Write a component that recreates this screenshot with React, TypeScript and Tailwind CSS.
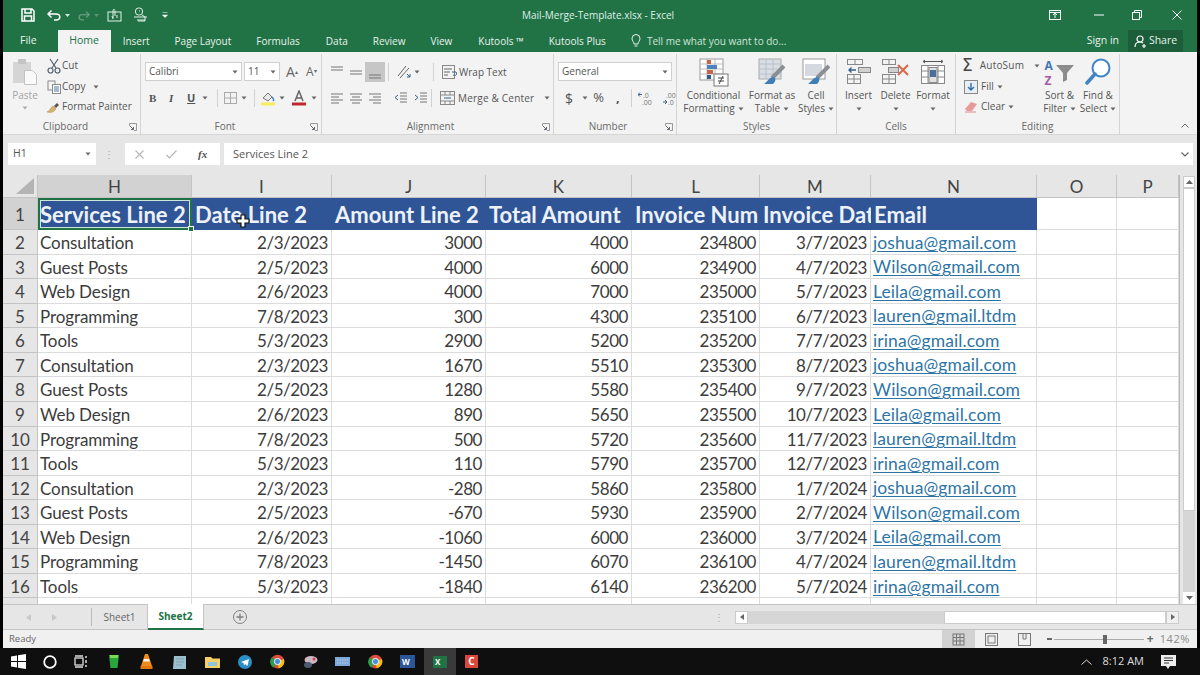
import React from "react";

const ribbonFont = "[font-family:'Open_Sans','Noto_Sans',sans-serif]";

type Row = [string, string, string, string, string, string, string];
const rows: Row[] = [
  ["Consultation", "2/3/2023", "3000", "4000", "234800", "3/7/2023", "joshua@gmail.com"],
  ["Guest Posts", "2/5/2023", "4000", "6000", "234900", "4/7/2023", "Wilson@gmail.com"],
  ["Web Design", "2/6/2023", "4000", "7000", "235000", "5/7/2023", "Leila@gmail.com"],
  ["Programming", "7/8/2023", "300", "4300", "235100", "6/7/2023", "lauren@gmail.ltdm"],
  ["Tools", "5/3/2023", "2900", "5200", "235200", "7/7/2023", "irina@gmail.com"],
  ["Consultation", "2/3/2023", "1670", "5510", "235300", "8/7/2023", "joshua@gmail.com"],
  ["Guest Posts", "2/5/2023", "1280", "5580", "235400", "9/7/2023", "Wilson@gmail.com"],
  ["Web Design", "2/6/2023", "890", "5650", "235500", "10/7/2023", "Leila@gmail.com"],
  ["Programming", "7/8/2023", "500", "5720", "235600", "11/7/2023", "lauren@gmail.ltdm"],
  ["Tools", "5/3/2023", "110", "5790", "235700", "12/7/2023", "irina@gmail.com"],
  ["Consultation", "2/3/2023", "-280", "5860", "235800", "1/7/2024", "joshua@gmail.com"],
  ["Guest Posts", "2/5/2023", "-670", "5930", "235900", "2/7/2024", "Wilson@gmail.com"],
  ["Web Design", "2/6/2023", "-1060", "6000", "236000", "3/7/2024", "Leila@gmail.com"],
  ["Programming", "7/8/2023", "-1450", "6070", "236100", "4/7/2024", "lauren@gmail.ltdm"],
  ["Tools", "5/3/2023", "-1840", "6140", "236200", "5/7/2024", "irina@gmail.com"],
];

const Caret = ({ className = "" }: { className?: string }) => (
  <svg width="6" height="4" viewBox="0 0 6 4" className={className}><path d="M0.5 0.5h5L3 3.5z" fill="#666" /></svg>
);

const Launcher = () => (
  <svg width="8" height="8" viewBox="0 0 8 8" className="shrink-0">
    <path d="M0.5 3V0.5H7.5V7.5H5" fill="none" stroke="#999" />
    <path d="M1 3l3.5 3.5M4.5 4v2.5H2" fill="none" stroke="#667" />
  </svg>
);

const Group = ({ w, label, labelClass = "", launcher = true, children }: { w: string; label: string; labelClass?: string; launcher?: boolean; children: React.ReactNode }) => (
  <div className={`${w} h-[80px] shrink-0 flex flex-col border-r border-[#d4d4d4] mt-[2px]`}>
    <div className="flex-1 min-h-0 flex">{children}</div>
    <div className="h-[15px] flex items-center relative text-[10px] text-[#6a6a6a]">
      <span className={`flex-1 text-center ${labelClass}`}>{label}</span>
      {launcher && <span className="absolute right-[3px] top-[4px]"><Launcher /></span>}
    </div>
  </div>
);

const Combo = ({ w, text }: { w: string; text: string }) => (
  <div className={`${w} h-[19px] bg-white border border-[#d0d0d0] flex items-center justify-between px-[3px] text-[10px] text-[#555]`}>
    <span>{text}</span>
    <Caret />
  </div>
);

const AlignLines = ({ kind }: { kind: "top" | "mid" | "bot" | "left" | "center" | "right" }) => {
  const d: Record<string, string> = {
    top: "M2 2h12M2 5h12",
    mid: "M2 6h12M2 9h12",
    bot: "M2 10h12M2 13h12",
    left: "M2 3h12M2 6h8M2 9h12M2 12h8",
    center: "M2 3h12M4 6h8M2 9h12M4 12h8",
    right: "M2 3h12M6 6h8M2 9h12M6 12h8",
  };
  return <svg width="16" height="15" viewBox="0 0 16 15"><path d={d[kind]} stroke="#777" strokeWidth="1" fill="none" /></svg>;
};

const BigLabel = ({ w, a, b }: { w: string; a: string; b?: string }) => (
  <div className={`${w} flex flex-col items-center text-[10px] leading-[13px] text-[#555] whitespace-nowrap`}>
    <span>{a}</span>
    {b ? (
      <span className="flex items-center gap-[3px]">{b}<Caret /></span>
    ) : (
      <span className="h-[13px] flex items-center"><Caret /></span>
    )}
  </div>
);

const ConditionalIcon = () => (
  <svg width="30" height="29" viewBox="0 0 30 29">
    <rect x="1" y="1" width="23" height="21" fill="#fff" stroke="#999" />
    <path d="M1 6h23M1 11h23M1 16h23M8 1v21M16 1v21" stroke="#bbb" />
    <rect x="8" y="2" width="4" height="4" fill="#c2674a" />
    <rect x="8" y="7" width="10" height="4" fill="#4f81bd" />
    <rect x="8" y="12" width="6" height="4" fill="#c2674a" />
    <rect x="8" y="17" width="4" height="4" fill="#345a8a" />
    <rect x="15" y="16" width="14" height="12" fill="#fff" stroke="#777" />
    <path d="M19 20h6M19 23h6M24 18l-4 8" stroke="#444" />
  </svg>
);

const TableIcon = () => (
  <svg width="28" height="28" viewBox="0 0 28 28">
    <rect x="1" y="1" width="22" height="20" fill="#d9dde4" stroke="#aaa" />
    <path d="M1 6h22M1 11h22M1 16h22M8 1v20M15 1v20" stroke="#bcc1c9" />
    <path d="M26 8L14 20" stroke="#8a8f96" strokeWidth="4" />
    <path d="M15 19c-4 1-5 4-9 7h9c2-2 3-4 2-6z" fill="#3f7fb5" />
  </svg>
);

const CellStyleIcon = () => (
  <svg width="28" height="28" viewBox="0 0 28 28">
    <rect x="1" y="1" width="22" height="20" fill="#fff" stroke="#999" />
    <rect x="3" y="6" width="17" height="12" fill="#d5d9df" />
    <path d="M27 8L15 20" stroke="#8a8f96" strokeWidth="4" />
    <path d="M15 19c-4 1-5 4-9 7h9c2-2 3-4 2-6z" fill="#3f7fb5" />
  </svg>
);

const InsertIcon = () => (
  <svg width="26" height="26" viewBox="0 0 26 26" fill="none" stroke="#888">
    <rect x="1.5" y="1.5" width="15" height="5" />
    <path d="M9 2v4" />
    <rect x="1.5" y="16.5" width="13" height="9" />
    <path d="M1.5 21h13M8 17v8" />
    <rect x="12.5" y="9.5" width="12" height="5" fill="#d0d0d0" />
    <path d="M10 12H3M5.5 9.5L3 12l2.5 2.5" stroke="#34608f" strokeWidth="1.4" />
  </svg>
);

const DeleteIcon = () => (
  <svg width="30" height="26" viewBox="0 0 30 26" fill="none" stroke="#888">
    <rect x="1.5" y="1.5" width="13" height="5" />
    <path d="M8 2v4" />
    <rect x="1.5" y="16.5" width="13" height="9" />
    <path d="M1.5 21h13M8 17v8" />
    <rect x="7.5" y="9.5" width="10" height="5" fill="#d0d0d0" />
    <path d="M17 7l10 10M27 7L17 17" stroke="#d9694a" strokeWidth="2" />
  </svg>
);

const FormatIcon = () => (
  <svg width="26" height="28" viewBox="0 0 26 28" fill="none" stroke="#888">
    <path d="M3 3.5h20M3 3.5l2-1.5M3 3.5l2 1.500M23 3.500l-2-1.500M23 3.500l-2 1.500" stroke="#555" />
    <rect x="1.500" y="7.500" width="23" height="18" fill="#fff" />
    <path d="M8 8v17M18 8v17M2 13h22M2 19h22" />
    <rect x="9" y="9.500" width="8" height="15" fill="#e2e2e2" />
    <rect x="10" y="12" width="6" height="7" fill="#4a6f9b" stroke="none" />
  </svg>
);

const SortIcon = () => (
  <div className="flex items-center h-[30px] w-[30px]">
    <div className="flex flex-col w-[11px] text-[12px] leading-[15px] font-bold">
      <span className="text-[#3f78b5]">A</span>
      <span className="text-[#a45aa8]">Z</span>
    </div>
    <svg width="18" height="18" viewBox="0 0 18 18"><path d="M0 1h18l-7 8v7l-4 2V9z" fill="#8c8c8c" /></svg>
  </div>
);

const FindIcon = () => (
  <svg width="26" height="28" viewBox="0 0 26 28" fill="none">
    <circle cx="16" cy="10" r="8.500" stroke="#3f84c4" strokeWidth="2" fill="#fff" />
    <path d="M10 16L2 25" stroke="#3f84c4" strokeWidth="3.500" strokeLinecap="round" />
  </svg>
);

const Ribbon = () => (
  <div className={`h-[83px] bg-[#f3f3f3] border-b border-[#d6d6d6] flex ${ribbonFont} text-[#555] shrink-0`}>
    {/* Clipboard */}
    <Group w="w-[138px]" label="Clipboard" labelClass="pr-[12px]">
      <div className="w-[44px] flex flex-col items-center pt-[3px] text-[10px] text-[#a4a4a4] shrink-0">
        <svg width="27" height="29" viewBox="0 0 27 29">
          <rect x="1" y="5" width="18" height="21" rx="1" fill="#d5d5d5" />
          <rect x="6" y="2" width="8" height="5" rx="1" fill="#c4c4c4" />
          <path d="M12.500 13.500h8l4 4v10h-12z" fill="#fafafa" stroke="#c2c2c2" />
        </svg>
        <span className="mt-[2px] leading-[14px]">Paste</span>
        <Caret className="mt-[4px] opacity-50" />
      </div>
      <div className="flex flex-col text-[10px] text-[#555] pt-[1px]">
        <div className="h-[21px] flex items-center gap-[1px]">
          <svg width="14" height="16" viewBox="0 0 14 16" fill="none" stroke="#55606e" strokeWidth="1.200"><path d="M3 1l6 9M11 1L5 10" /><circle cx="3.500" cy="12.500" r="2.500" /><circle cx="10.500" cy="12.500" r="2.500" /></svg>
          <span>Cut</span>
        </div>
        <div className="h-[21px] flex items-center gap-[1px]">
          <svg width="14" height="14" viewBox="0 0 14 14" fill="none" stroke="#8a8a8a"><rect x="1" y="1" width="7" height="9" fill="#f5f5f5" /><rect x="5.500" y="4.500" width="8" height="9" fill="#fff" /><path d="M7 7h5M7 9h5M7 11h5" stroke="#4a74a8" /></svg>
          <span>Copy</span>
          <Caret className="ml-[7px]" />
        </div>
        <div className="h-[19px] flex items-center gap-[1px] ml-[-1px]">
          <svg width="15" height="14" viewBox="0 0 15 14"><path d="M1 12c3-1 3-4 6-6l3 3c-2 3-5 4-9 3z" fill="#d8b36a" stroke="#a68a4d" strokeWidth="0.500" /><path d="M8 6l3-3 2 2-3 3z" fill="#555" /></svg>
          <span>Format Painter</span>
        </div>
      </div>
    </Group>

    {/* Font */}
    <Group w="w-[181px]" label="Font" labelClass="pr-[12px]">
      <div className="flex flex-col pl-[4px] pt-[8px]">
        <div className="flex items-center gap-[2px]">
          <Combo w="w-[97px]" text="Calibri" />
          <Combo w="w-[36px]" text="11" />
          <span className="ml-[4px] w-[18px] text-[14px] text-[#666] leading-none">A<sup className="text-[6px]">▴</sup></span>
          <span className="text-[12px] text-[#666] leading-none">A<sup className="text-[6px]">▾</sup></span>
        </div>
        <div className="flex items-center h-[18px] mt-[8px] text-[11px] text-[#555]">
          <b className="ml-[4px] w-[20px] font-['Liberation_Serif'] font-bold">B</b>
          <i className="w-[18px] font-['Liberation_Serif'] font-bold">I</i>
          <u className="w-[15px] font-bold">U</u>
          <Caret />
          <span className="ml-[9px] w-px h-[18px] bg-[#d0d0d0]" />
          <svg className="ml-[5px]" width="15" height="14" viewBox="0 0 15 14" fill="none" stroke="#aaa"><rect x="1.500" y="1.500" width="12" height="11" /><path d="M7.500 1.500v11M1.500 7h12" /></svg>
          <Caret className="ml-[3px]" />
          <span className="ml-[7px] w-px h-[18px] bg-[#d0d0d0]" />
          <svg className="ml-[5px]" width="16" height="16" viewBox="0 0 16 16"><path d="M3 8l5-5 4 4-4 4z" fill="#e8e8e8" stroke="#777" /><path d="M12 7c2 2 2 3 1 4" stroke="#3f7fb5" strokeWidth="1.500" fill="none" /><rect x="1" y="12.500" width="14" height="3" fill="#f3ee5a" /></svg>
          <Caret className="ml-[3px]" />
          <svg className="ml-[6px]" width="16" height="16" viewBox="0 0 16 16"><path d="M4 11L8 1l4 10M5.500 8h5" fill="none" stroke="#666" strokeWidth="1.500" /><rect x="1" y="12.500" width="14" height="3" fill="#c4262e" /></svg>
          <Caret className="ml-[4px]" />
        </div>
      </div>
    </Group>

    {/* Alignment */}
    <Group w="w-[232px]" label="Alignment" labelClass="pr-[14px]">
      <div className="flex flex-col pl-[7px] pt-[8px] text-[10px] text-[#555]">
        <div className="flex items-center h-[20px]">
          <AlignLines kind="top" />
          <span className="ml-[3px]"><AlignLines kind="mid" /></span>
          <span className="ml-[1px] w-[20px] h-[20px] bg-[#c6c6c6] flex items-center justify-center"><AlignLines kind="bot" /></span>
          <span className="ml-[3px] w-px h-[18px] bg-[#d0d0d0]" />
          <svg className="ml-[7px]" width="16" height="16" viewBox="0 0 16 16" fill="none" stroke="#666"><path d="M2 12L10 2M4 14l9-10" /><path d="M11 10l3 3M14 10v3h-3" stroke="#34608f" /></svg>
          <Caret className="ml-[2px]" />
          <span className="ml-[13px] w-px h-[18px] bg-[#d0d0d0]" />
          <svg className="ml-[8px]" width="16" height="14" viewBox="0 0 16 14" fill="none" stroke="#888"><rect x="0.500" y="0.500" width="12" height="13" /><path d="M2 4h8M2 7h6M2 10h4" stroke="#666" /><path d="M10 7h4c2 3-1 4-3 3" stroke="#34608f" /></svg>
          <span className="ml-[1px]">Wrap Text</span>
        </div>
        <div className="flex items-center h-[20px] mt-[6px]">
          <AlignLines kind="left" />
          <span className="ml-[3px]"><AlignLines kind="center" /></span>
          <span className="ml-[3px]"><AlignLines kind="right" /></span>
          <svg className="ml-[10px]" width="15" height="13" viewBox="0 0 15 13" fill="none" stroke="#777"><path d="M7 1h7M7 4h7M7 7h7M7 10h7" /><path d="M5 3L2 5.500 5 8" stroke="#34608f" /></svg>
          <svg className="ml-[5px]" width="15" height="13" viewBox="0 0 15 13" fill="none" stroke="#777"><path d="M7 1h7M7 4h7M7 7h7M7 10h7" /><path d="M2 3l3 2.500L2 8" stroke="#34608f" /></svg>
          <span className="ml-[3px] w-px h-[18px] bg-[#d0d0d0]" />
          <svg className="ml-[8px]" width="16" height="14" viewBox="0 0 16 14" fill="none" stroke="#888"><rect x="0.500" y="0.500" width="14" height="13" /><path d="M1 4h14M1 10h14M5 1v3M10 1v3M5 10v3M10 10v3" /><path d="M4 7h7" stroke="#34608f" /></svg>
          <span className="ml-[2px] tracking-[0.2px]">Merge &amp; Center</span>
          <Caret className="ml-[10px]" />
        </div>
      </div>
    </Group>

    {/* Number */}
    <Group w="w-[123px]" label="Number" labelClass="pr-[14px]">
      <div className="flex flex-col pl-[4px] pt-[8px]">
        <Combo w="w-[114px]" text="General" />
        <div className="flex items-center h-[20px] mt-[7px] text-[#555]">
          <span className="ml-[7px] text-[14px] w-[12px]">$</span>
          <Caret className="ml-[5px]" />
          <span className="ml-[3px] text-[13px] w-[15px] text-center">%</span>
          <span className="ml-[10px] text-[13px] font-bold w-[6px]">,</span>
          <span className="ml-[9px] w-px h-[18px] bg-[#d0d0d0]" />
          <svg className="ml-[6px]" width="15" height="15" viewBox="0 0 15 15" fill="#777"><text x="5" y="6.500" fontSize="7" fontFamily="Open Sans">.0</text><text x="4" y="13.500" fontSize="7" fontFamily="Open Sans">.00</text><path d="M0 3.500h4M0 3.500l2-2M0 3.500l2 2" stroke="#34608f" /></svg>
          <svg className="ml-[9px]" width="15" height="15" viewBox="0 0 15 15" fill="#777"><text x="4" y="6.500" fontSize="7" fontFamily="Open Sans">.00</text><text x="6" y="13.500" fontSize="7" fontFamily="Open Sans">.0</text><path d="M1 11h4M5 11l-2-2M5 11l-2 2" stroke="#34608f" /></svg>
        </div>
      </div>
    </Group>

    {/* Styles */}
    <Group w="w-[160px]" label="Styles" launcher={false}>
      <div className="flex pl-[3px] pt-[4px]">
        <div className="w-[67px] flex flex-col items-center">
          <span className="h-[31px]"><ConditionalIcon /></span>
          <BigLabel w="w-[67px]" a="Conditional" b="Formatting" />
        </div>
        <div className="w-[50px] flex flex-col items-center">
          <span className="h-[31px]"><TableIcon /></span>
          <BigLabel w="w-[50px]" a="Format as" b="Table" />
        </div>
        <div className="w-[38px] flex flex-col items-center">
          <span className="h-[31px]"><CellStyleIcon /></span>
          <BigLabel w="w-[38px]" a="Cell" b="Styles" />
        </div>
      </div>
    </Group>

    {/* Cells */}
    <Group w="w-[119px]" label="Cells" launcher={false}>
      <div className="flex pl-[3px] pt-[4px]">
        <div className="w-[37px] flex flex-col items-center"><span className="h-[31px]"><InsertIcon /></span><BigLabel w="w-[37px]" a="Insert" /></div>
        <div className="w-[37px] flex flex-col items-center"><span className="h-[31px]"><DeleteIcon /></span><BigLabel w="w-[37px]" a="Delete" /></div>
        <div className="w-[38px] flex flex-col items-center"><span className="h-[31px]"><FormatIcon /></span><BigLabel w="w-[38px]" a="Format" /></div>
      </div>
    </Group>

    {/* Editing */}
    <Group w="w-[164px]" label="Editing" launcher={false}>
      <div className="flex pl-[6px]">
        <div className="w-[78px] flex flex-col text-[10px] text-[#555] pt-[1px]">
          <div className="h-[21px] flex items-center gap-[3px]">
            <span className="w-[15px] text-[17px] leading-none text-[#444] font-['DejaVu_Sans']">Σ</span>
            <span className="tracking-[0.2px]">AutoSum</span>
            <Caret className="ml-[7px]" />
          </div>
          <div className="h-[21px] flex items-center gap-[3px] pl-[2px]">
            <svg width="14" height="14" viewBox="0 0 14 14" fill="none"><rect x="0.500" y="0.500" width="13" height="13" fill="#e8eef5" stroke="#888" /><path d="M7 3v7M4 7l3 3 3-3" stroke="#2f6ea8" strokeWidth="1.400" /></svg>
            <span>Fill</span>
            <Caret />
          </div>
          <div className="h-[19px] flex items-center gap-[3px] pl-[2px]">
            <svg width="14" height="13" viewBox="0 0 14 13"><path d="M1 9l6-7 6 2-5 7H3z" fill="#e89a9a" /><path d="M1 12h11" stroke="#d88" /></svg>
            <span>Clear</span>
            <Caret />
          </div>
        </div>
        <div className="w-[39px] flex flex-col items-center pt-[4px]">
          <span className="h-[31px]"><SortIcon /></span>
          <BigLabel w="w-[39px]" a="Sort &" b="Filter" />
        </div>
        <div className="w-[38px] flex flex-col items-center pt-[4px]">
          <span className="h-[31px]"><FindIcon /></span>
          <BigLabel w="w-[38px]" a="Find &" b="Select" />
        </div>
      </div>
    </Group>

    <div className="flex-1 flex items-end justify-end pr-[8px] pb-[6px]">
      <svg width="8" height="5" viewBox="0 0 8 5" fill="none" stroke="#666"><path d="M0.500 4.500L4 1l3.500 3.500" /></svg>
    </div>
  </div>
);

const TitleBar = () => (
  <div className={`bg-[#217346] h-[52px] shrink-0 flex flex-col text-white ${ribbonFont}`}>
    <div className="h-[30px] flex items-center relative">
      <svg className="ml-[18px]" width="14" height="14" viewBox="0 0 14 14" fill="none" stroke="#fff" strokeWidth="1.500"><path d="M1 1h10l2 2v10H1z" /><path d="M4 1v4h6V1M3.500 13V8h7v5" /></svg>
      <svg className="ml-[12px]" width="14" height="12" viewBox="0 0 14 12" fill="none" stroke="#fff" strokeWidth="1.500"><path d="M1 5h8c5 0 5 6 0 6H7M4.500 1.500L1 5l3.500 3.500" /></svg>
      <svg className="ml-[4px]" width="5" height="3" viewBox="0 0 5 3"><path d="M0 0h5L2.500 3z" fill="#d6e6dd" /></svg>
      <svg className="ml-[8px] opacity-30" width="12" height="11" viewBox="0 0 14 12" fill="none" stroke="#fff" strokeWidth="1.500"><path d="M13 5H5c-5 0-5 6 0 6h2M9.500 1.500L13 5 9.500 8.500" /></svg>
      <svg className="ml-[4px] opacity-30" width="5" height="3" viewBox="0 0 5 3"><path d="M0 0h5L2.500 3z" fill="#d6e6dd" /></svg>
      <svg className="ml-[8px]" width="15" height="15" viewBox="0 0 15 15" fill="none" stroke="#e6f0ea"><rect x="1" y="4" width="13" height="9" /><path d="M6 10V2.500a1 1 0 012 0M8 3v5M10 7v3M5 8l1 3" /></svg>
      <svg className="ml-[11px]" width="15" height="16" viewBox="0 0 15 16" fill="none" stroke="#e6f0ea"><rect x="2.500" y="1" width="7" height="7" rx="3" /><path d="M1 10h13M4 13h8M6 4h1" /><path d="M9 8l3 2v4H5" /></svg>
      <svg className="ml-[14px]" width="6" height="6" viewBox="0 0 6 6"><path d="M0.500 0.500h5M0.500 3h5L3 5.500z" fill="#fff" stroke="#fff" strokeWidth="0.500" /></svg>
      <span className="absolute left-[519px] top-[8px] text-[10px] leading-[15px] text-[#dff0e6]">Mail-Merge-Template.xlsx - Excel</span>
      <div className="ml-auto flex items-center text-white mr-[15px]">
        <svg width="12" height="10" viewBox="0 0 12 10" fill="none" stroke="#fff"><rect x="0.500" y="0.500" width="11" height="9" /><path d="M6 8V3M4 5l2-2 2 2M1 2.500h10" /></svg>
        <svg className="ml-[33px]" width="10" height="2" viewBox="0 0 10 2"><path d="M0 1h10" stroke="#fff" /></svg>
        <svg className="ml-[28px]" width="10" height="10" viewBox="0 0 10 10" fill="none" stroke="#fff"><rect x="0.500" y="2.500" width="7" height="7" /><path d="M2.500 2.500v-2h7v7h-2" /></svg>
        <svg className="ml-[30px]" width="10" height="10" viewBox="0 0 10 10" fill="none" stroke="#fff"><path d="M0.500 0.500l9 9M9.500 0.500l-9 9" /></svg>
      </div>
    </div>
    <div className="h-[22px] flex items-center text-[10px] text-[#e8f2ec]">
      <span className="ml-[17px] text-[10.5px]">File</span>
      <span className="ml-[21px] w-[53px] h-[22px] bg-[#f3f3f3] text-[#217346] text-[10.5px] flex items-center justify-center">Home</span>
      <span className="ml-[12px]">Insert</span>
      <span className="ml-[25px]">Page Layout</span>
      <span className="ml-[25px]">Formulas</span>
      <span className="ml-[26px]">Data</span>
      <span className="ml-[25px]">Review</span>
      <span className="ml-[25px]">View</span>
      <span className="ml-[26px]">Kutools ™</span>
      <span className="ml-[25px]">Kutools Plus</span>
      <svg className="ml-[25px]" width="10" height="14" viewBox="0 0 10 14" fill="none" stroke="#e8f2ec"><path d="M3 10c0-2-2-3-2-5.500a4 4 0 018 0C9 7 7 8 7 10zM3.500 12h3" /></svg>
      <span className="ml-[6px] text-[#cfe3d7]">Tell me what you want to do...</span>
      <span className="ml-auto text-[10.5px]">Sign in</span>
      <span className="ml-[9px] mr-[14px] w-[55px] h-[22px] bg-[#1b5e39] flex items-center justify-center gap-[3px] text-[10.5px]">
        <svg width="12" height="13" viewBox="0 0 12 13" fill="none" stroke="#fff" strokeWidth="1.200"><circle cx="6" cy="4" r="3" /><path d="M1 12c0-3 2-5 5-5 1.500 0 2.500.500 3 1M8 11h4M10 9v4" /></svg>
        Share
      </span>
    </div>
  </div>
);

const FormulaBar = () => (
  <div className={`h-[40px] bg-[#e6e6e6] shrink-0 flex items-center pl-[5px] pr-[4px] pb-[2px] ${ribbonFont}`}>
    <div className="w-[88px] h-[22px] bg-white flex items-center justify-between px-[5px] text-[10.5px] text-[#555]">
      <span>H1</span>
      <Caret />
    </div>
    <span className="ml-[8px] text-[10px] text-[#aaa] w-[21px] leading-none">⋮</span>
    <div className="w-[95px] h-[22px] bg-white flex items-center text-[#bbb]">
      <svg className="ml-[10px]" width="9" height="9" viewBox="0 0 9 9" fill="none" stroke="#b8b8b8" strokeWidth="1.200"><path d="M0.500 0.500l8 8M8.500 0.500l-8 8" /></svg>
      <svg className="ml-[22px]" width="11" height="9" viewBox="0 0 11 9" fill="none" stroke="#b8b8b8" strokeWidth="1.200"><path d="M0.500 5l3 3 7-7.500" /></svg>
      <span className="ml-[21px] text-[11px] italic text-[#555] font-['Liberation_Serif'] font-bold">fx</span>
    </div>
    <div className="ml-[4px] flex-1 h-[22px] bg-white flex items-center justify-between pl-[9px] pr-[4px] text-[11px] text-[#555]">
      <span>Services Line 2</span>
      <svg width="8" height="5" viewBox="0 0 8 5" fill="none" stroke="#666" strokeWidth="1.200"><path d="M0.500 0.500L4 4l3.500-3.500" /></svg>
    </div>
  </div>
);

const cols = ["H", "I", "J", "K", "L", "M", "N", "O", "P"];
const gridCols = "grid-cols-[35px_154px_140px_154px_146px_128px_111px_166px_80px_62px]";
const cellBase = "border-r border-b border-[#dcdcdc] flex items-center overflow-hidden whitespace-nowrap pt-[2px]";

const Sheet = () => (
  <div className="flex-1 min-h-0 flex bg-[#e6e6e6] relative">
    <div className={`w-[1176px] shrink-0 font-['Lato',sans-serif] grid ${gridCols} grid-rows-[23px_32px_repeat(15,24.57px)_auto] bg-white`}>
      <div className="bg-[#e6e6e6] border-r border-[#c4c4c4] border-b flex items-end justify-end pr-[3px] pb-[3px]">
        <svg width="18" height="16" viewBox="0 0 18 16"><path d="M18 0v16H0z" fill="#b4b4b4" /></svg>
      </div>
      {cols.map((c, i) => (
        <div key={c} className={`${i === 0 ? "bg-[#d2d2d2]" : "bg-[#e6e6e6]"} border-r border-b border-[#c4c4c4] flex items-center justify-center pt-[2px] text-[17px] text-[#444]`}>{c}</div>
      ))}

      <div className="bg-[#d2d2d2] border-r border-b border-[#c4c4c4] flex items-center justify-center pt-[2px] text-[17px] text-[#444]">1</div>
      {["Services Line 2", "Date Line 2", "Amount Line 2", "Total Amount", "Invoice Num", "Invoice Dat", "Email"].map((h, i) =>
        i === 0 ? (
          <div key={h} className="bg-[#2f5597] flex items-center whitespace-nowrap text-[22px] font-bold text-[#eef2f8] border-2 border-[#217346] shadow-[inset_0_0_0_1px_#cfe5dc] relative">
            {h}
            <span className="absolute right-[-4px] bottom-[-4px] w-[6px] h-[6px] bg-[#217346] border border-white z-10" />
          </div>
        ) : (
          <div key={h} className="bg-[#2f5597] flex items-center overflow-hidden whitespace-nowrap text-[22px] font-bold text-[#eef2f8] pl-[3px]">{h}</div>
        )
      )}
      <div className="border-r border-b border-[#dcdcdc]" />
      <div className="border-r border-b border-[#dcdcdc]" />

      {rows.map((r, idx) => (
        <React.Fragment key={idx}>
          <div className="bg-[#e6e6e6] border-r border-b border-[#c4c4c4] flex items-center justify-center pt-[2px] text-[17px] text-[#444]">{idx + 2}</div>
          <div className={`${cellBase} pl-[2px] text-[17px] tracking-[-0.1px] text-[#3c3c3c]`}>{r[0]}</div>
          {r.slice(1, 6).map((v, i) => (
            <div key={i} className={`${cellBase} justify-end pr-[3px] text-[17px] tracking-[-0.45px] text-[#3c3c3c]`}>{v}</div>
          ))}
          <div className={`${cellBase} pl-[2px] text-[17.5px] tracking-[0.1px] text-[#2e75a6] underline underline-offset-2 decoration-1`}>{r[6]}</div>
          <div className={cellBase} />
          <div className={cellBase} />
        </React.Fragment>
      ))}
      <div className="bg-[#e6e6e6] border-r border-[#c4c4c4]" />
      {[0, 1, 2, 3, 4, 5, 6, 7, 8].map((i) => (
        <div key={i} className="border-r border-[#dcdcdc]" />
      ))}
    </div>

    <div className="w-[18px] shrink-0 flex flex-col items-stretch pl-[3px] pr-[2px] pt-[1px] border-l border-[#b8b8b8]">
      <div className="h-[12px] bg-white border border-[#ccc] flex items-center justify-center"><svg width="7" height="4" viewBox="0 0 7 4"><path d="M0 4h7L3.500 0z" fill="#666" /></svg></div>
      <div className="h-[323px] bg-white border border-[#ccc]" />
      <div className="flex-1 bg-[#d6d6d6]" />
      <div className="h-[12px] bg-white flex items-center justify-center"><svg width="7" height="4" viewBox="0 0 7 4"><path d="M0 0h7L3.500 4z" fill="#666" /></svg></div>
    </div>

    {/* drag cursor over the sheet */}
    <svg className="absolute left-[233px] top-[39px]" width="14" height="14" viewBox="0 0 14 14">
      <path d="M5 1h4v4h4v4H9v4H5V9H1V5h4z" fill="#fff" stroke="#111" strokeWidth="1.200" />
    </svg>
  </div>
);

const TabsBar = () => (
  <div className={`h-[26px] bg-[#e6e6e6] border-t border-[#c4c4c4] border-b shrink-0 flex items-center ${ribbonFont}`}>
    <svg className="ml-[23px]" width="5" height="7" viewBox="0 0 5 7"><path d="M5 0v7L0 3.500z" fill="#c8c8c8" /></svg>
    <svg className="ml-[21px]" width="5" height="7" viewBox="0 0 5 7"><path d="M0 0v7l5-3.500z" fill="#c8c8c8" /></svg>
    <span className="ml-[34px] w-px h-[18px] bg-[#bbb]" />
    <span className="w-[56px] h-full flex items-center justify-center text-[10px] text-[#666] border-r border-[#c4c4c4]">Sheet1</span>
    <span className="w-[56px] h-[26px] bg-white flex items-center justify-center text-[10px] font-bold text-[#217346] border-b-2 border-[#217346] border-r border-r-[#c4c4c4]">Sheet2</span>
    <svg className="ml-[29px]" width="14" height="14" viewBox="0 0 14 14" fill="none" stroke="#808080"><circle cx="7" cy="7" r="6.500" /><path d="M7 3.500v7M3.500 7h7" strokeWidth="1.300" /></svg>
    <span className="ml-[467px] text-[10px] text-[#aaa] leading-none">⋮</span>
    <div className="ml-[11px] w-[13px] h-[13px] bg-white border border-[#ccc] flex items-center justify-center"><svg width="4" height="6" viewBox="0 0 4 6"><path d="M4 0v6L0 3z" fill="#666" /></svg></div>
    <div className="w-[196px] h-[13px] bg-[#d6d6d6]" />
    <div className="w-[222px] h-[13px] bg-white border border-[#ccc]" />
    <div className="w-[13px] h-[13px] bg-[#f0f0f0] border border-[#ccc] flex items-center justify-center"><svg width="4" height="6" viewBox="0 0 4 6"><path d="M0 0v6l4-3z" fill="#666" /></svg></div>
  </div>
);

const StatusBar = () => (
  <div className={`h-[18px] bg-[#f0f0f0] shrink-0 flex items-center text-[9.5px] text-[#666] ${ribbonFont}`}>
    <span className="ml-[6px]">Ready</span>
    <div className="ml-auto h-full w-[33px] bg-[#d2d2d2] flex items-center justify-center">
      <svg width="13" height="13" viewBox="0 0 13 13" fill="none" stroke="#777"><rect x="1" y="1" width="11" height="11" /><path d="M1 4.500h11M1 8h11M4.500 1v11M8 1v11" /></svg>
    </div>
    <svg className="ml-[10px]" width="13" height="13" viewBox="0 0 13 13" fill="none" stroke="#777"><rect x="0.500" y="0.500" width="12" height="12" /><rect x="3" y="3" width="7" height="7" /></svg>
    <svg className="ml-[20px]" width="13" height="13" viewBox="0 0 13 13" fill="none" stroke="#777"><rect x="0.500" y="0.500" width="12" height="12" /><path d="M5 1v5h3V1" /></svg>
    <span className="ml-[16px] w-[5px] h-[2px] bg-[#666]" />
    <span className="ml-[2px] w-[49px] h-px bg-[#aaa]" />
    <span className="w-[4px] h-[9px] bg-[#666]" />
    <span className="w-[37px] h-px bg-[#aaa]" />
    <span className="ml-[3px] text-[12px] text-[#666] font-bold leading-none">+</span>
    <span className="ml-[6px] mr-[7px] text-[11px] tracking-[0.6px] text-[#8a8a8a]">142%</span>
  </div>
);

const Chrome = ({ className }: { className: string }) => (
  <svg className={className} width="15" height="15" viewBox="0 0 24 24"><circle cx="12" cy="12" r="11" fill="#dd4b3a" /><path d="M12 12L22 8a11 11 0 01-8 15z" fill="#f4c20d" /><path d="M12 12L6 22A11 11 0 013 5z" fill="#2e9e48" /><circle cx="12" cy="12" r="5" fill="#4a8be0" stroke="#fff" strokeWidth="1.500" /></svg>
);

const Taskbar = () => (
  <div className={`absolute left-0 right-0 bottom-0 h-[27px] bg-[#0f0f0f] flex items-center ${ribbonFont}`}>
    <svg className="ml-[11px]" width="15" height="15" viewBox="0 0 15 15" fill="#fff"><path d="M0 2.500l6-1v5.500H0zM7 1.300L15 0v7H7zM0 8h6v5.500l-6-1zM7 8h8v7l-8-1.300z" /></svg>
    <svg className="ml-[17px]" width="14" height="14" viewBox="0 0 14 14" fill="none" stroke="#fff" strokeWidth="1.800"><circle cx="7" cy="7" r="5.800" /></svg>
    <svg className="ml-[17px]" width="15" height="13" viewBox="0 0 15 13" fill="none" stroke="#ddd" strokeWidth="1.300"><rect x="1" y="3" width="8" height="7" /><path d="M1 1h8M1 12h8M12 1v2M12 5v3M12 10v2" strokeWidth="1.500" /></svg>
    <svg className="ml-[19px]" width="12" height="15" viewBox="0 0 12 15"><path d="M1 1h10l-1.500 13h-7z" fill="#2aa63c" /><path d="M2 1h8v3H2z" fill="#7ed957" /></svg>
    <svg className="ml-[20px]" width="13" height="15" viewBox="0 0 13 15"><path d="M5 0h3l4 12H1z" fill="#f08a1c" /><path d="M4 5h5l1 2.500H3z" fill="#f3f3f3" /><rect x="0.500" y="12" width="12" height="3" fill="#e07a10" /></svg>
    <svg className="ml-[20px]" width="13" height="14" viewBox="0 0 13 14"><path d="M1 1h12v13H0z" fill="#9dc0cf" /><path d="M3 4h8M3 7h8M3 10h6" stroke="#7fa3b3" /></svg>
    <svg className="ml-[19px]" width="15" height="13" viewBox="0 0 15 13"><path d="M0 2h6l1.500 1.500H15V13H0z" fill="#f4cf66" /><rect x="3" y="7" width="9" height="4" fill="#8fc4dc" /></svg>
    <svg className="ml-[18px]" width="14" height="14" viewBox="0 0 14 14"><circle cx="7" cy="7" r="7" fill="#2a8fc6" /><path d="M3 7l8-3-1.500 7-2.500-2-1 1.500-.5-2.500z" fill="#fff" /></svg>
    <Chrome className="ml-[18px]" />
    <svg className="ml-[18px]" width="15" height="14" viewBox="0 0 15 14"><ellipse cx="8" cy="5" rx="6.500" ry="4" fill="#cdb8c2" /><ellipse cx="5" cy="10" rx="4" ry="3" fill="#4a5c70" /><circle cx="11" cy="4" r="1.500" fill="#c24b5c" /></svg>
    <svg className="ml-[17px]" width="15" height="9" viewBox="0 0 15 9"><rect width="15" height="9" fill="#7da8d8" /><path d="M2 3h11M2 6h11" stroke="#b6d0ec" strokeDasharray="1.500 1" /></svg>
    <Chrome className="ml-[18px]" />
    <span className="ml-[17px] w-[15px] h-[13px] bg-[#2b579a] flex items-center text-[8px] font-bold text-white pl-[2px]">W</span>
    <span className="ml-[9px] w-[32px] h-[27px] bg-[#3a3a3a] flex items-center justify-center">
      <span className="w-[14px] h-[12px] bg-[#217346] text-[8px] font-bold text-white leading-[12px] pl-[2px]">X</span>
    </span>
    <span className="ml-[9px] w-[13px] h-[13px] bg-[#d9473d] text-[10px] font-bold text-white flex items-center justify-center">C</span>
    <div className="ml-auto flex items-center text-[11px] text-[#ddd]">
      <svg width="11" height="6" viewBox="0 0 11 6" fill="none" stroke="#ddd"><path d="M0.500 5.500L5.500 1l5 4.500" /></svg>
      <span className="ml-[11px]">8:12 AM</span>
      <svg className="ml-[17px] mr-[24px]" width="15" height="14" viewBox="0 0 15 14"><path d="M0 0h15v11H9l-2 3-2-3H0z" fill="#eee" /><path d="M3 3h9M3 5.500h9M3 8h5" stroke="#333" /></svg>
    </div>
  </div>
);

export default function App() {
  return (
    <div className="w-[1200px] h-[675px] bg-black relative overflow-hidden">
      <div className="ml-[3px] w-[1194px] h-[648px] flex flex-col bg-[#f3f3f3]">
        <TitleBar />
        <Ribbon />
        <FormulaBar />
        <Sheet />
        <TabsBar />
        <StatusBar />
      </div>
      <Taskbar />
    </div>
  );
}
